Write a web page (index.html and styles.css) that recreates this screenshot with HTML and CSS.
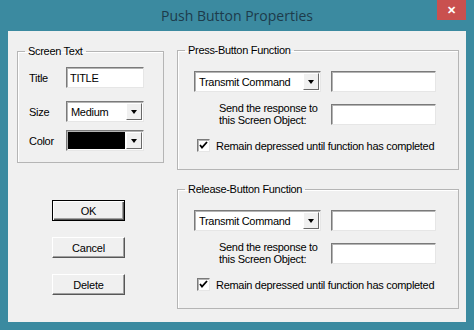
FILE: index.html
```html
<!DOCTYPE html>
<html lang="en">
<head>
    <meta charset="UTF-8">
    <title>Push Button Properties</title>
    <link rel="stylesheet" href="styles.css">
</head>
<body>
    <div class="window">
        <div class="titlebar">
            <span></span>
            <span class="title">Push Button Properties</span>
            <span class="close">&#x2715;</span>
        </div>
        <div class="client">
            <div class="left">
                <fieldset class="group screen-text">
                    <legend>Screen Text</legend>
                    <div class="field first">
                        <label>Title</label>
                        <input class="edit short" type="text" value="TITLE">
                    </div>
                    <div class="field size">
                        <label>Size</label>
                        <div class="combo short">
                            <span class="combo-value">Medium</span>
                            <span class="combo-btn"><i class="arrow"></i></span>
                        </div>
                    </div>
                    <div class="field color">
                        <label>Color</label>
                        <div class="combo short">
                            <span class="combo-value swatch"></span>
                            <span class="combo-btn"><i class="arrow"></i></span>
                        </div>
                    </div>
                </fieldset>
                <div class="buttons">
                    <button class="btn default">OK</button>
                    <button class="btn">Cancel</button>
                    <button class="btn">Delete</button>
                </div>
            </div>
            <div class="right">
                <fieldset class="group func">
                    <legend>Press-Button Function</legend>
                    <div class="func-row">
                        <div class="combo wide">
                            <span class="combo-value">Transmit Command</span>
                            <span class="combo-btn"><i class="arrow"></i></span>
                        </div>
                        <input class="edit long" type="text">
                    </div>
                    <div class="func-row response">
                        <span class="response-text">Send the response to<br>this Screen Object:</span>
                        <input class="edit long" type="text">
                    </div>
                    <div class="check-row">
                        <span class="check"><svg width="9" height="9" viewBox="0 0 9 9"><path d="M1 4 L3 6.5 L8 1" fill="none" stroke="#000" stroke-width="1.8"/></svg></span>
                        <span>Remain depressed until function has completed</span>
                    </div>
                </fieldset>
                <fieldset class="group func release">
                    <legend>Release-Button Function</legend>
                    <div class="func-row">
                        <div class="combo wide">
                            <span class="combo-value">Transmit Command</span>
                            <span class="combo-btn"><i class="arrow"></i></span>
                        </div>
                        <input class="edit long" type="text">
                    </div>
                    <div class="func-row response">
                        <span class="response-text">Send the response to<br>this Screen Object:</span>
                        <input class="edit long" type="text">
                    </div>
                    <div class="check-row">
                        <span class="check"><svg width="9" height="9" viewBox="0 0 9 9"><path d="M1 4 L3 6.5 L8 1" fill="none" stroke="#000" stroke-width="1.8"/></svg></span>
                        <span>Remain depressed until function has completed</span>
                    </div>
                </fieldset>
            </div>
        </div>
    </div>
</body>
</html>
```
FILE: styles.css
```css
body {
    margin: 0;
    padding: 0;
    background-color: #3b8aa0;
    font-family: "Liberation Sans", Arial, sans-serif;
    font-size: 11px;
    letter-spacing: -0.3px;
    color: #000;
}
.window {
    width: 474px;
    height: 330px;
    background-color: #3b8aa0;
}
.titlebar {
    height: 31px;
    display: grid;
    grid-template-columns: 1fr auto 1fr;
}
.title {
    font-family: "Open Sans", "Noto Sans", sans-serif;
    font-size: 14px;
    letter-spacing: 0;
    color: #1d3b4b;
    line-height: 32px;
}
.close {
    justify-self: end;
    width: 29px;
    height: 20px;
    margin-right: 8px;
    background-color: #c9504f;
    color: #fff;
    font-size: 11px;
    font-weight: bold;
    letter-spacing: 0;
    text-align: center;
    line-height: 20px;
}
.client {
    margin: 0 8px;
    height: 291px;
    background-color: #f0f0f0;
    display: flex;
    padding: 14px 0 0 9px;
    box-sizing: border-box;
}
.left {
    width: 147px;
    flex-shrink: 0;
    margin-right: 13px;
}
.right {
    width: 282px;
    flex-shrink: 0;
    min-width: 0;
    margin-top: -1px;
}
.group {
    margin: 0;
    padding: 0;
    min-width: 0;
    border: 1px solid #b5b5b5;
    box-shadow: inset 1px 1px 0 #fff;
}
.group legend {
    margin-left: 7px;
    padding: 0 3px;
    line-height: 13px;
}
.screen-text {
    height: 118px;
    box-sizing: border-box;
}
.field {
    display: flex;
    align-items: center;
    padding-left: 11px;
}
.field label {
    width: 37px;
}
.field.first { margin-top: 9px; }
.field.size { margin-top: 13px; }
.field.color { margin-top: 8px; }
.edit {
    height: 21px;
    box-sizing: border-box;
    margin: 0;
    padding: 1px 3px 0;
    background: #fff;
    border: 1px solid;
    border-color: #7a7a7a #e6e6e6 #e6e6e6 #7a7a7a;
    box-shadow: inset 1px 1px 0 #b4b4b4;
    font-family: "Liberation Sans", Arial, sans-serif;
    font-size: 11px;
    letter-spacing: -0.3px;
    color: #000;
    outline: none;
}
.short { width: 78px; }
.long { width: 105px; }
.wide { width: 127px; }
.combo {
    height: 21px;
    box-sizing: border-box;
    display: flex;
    background: #fff;
    border: 1px solid;
    border-color: #7a7a7a #e6e6e6 #e6e6e6 #7a7a7a;
    box-shadow: inset 1px 1px 0 #b4b4b4;
    padding: 1px;
}
.combo-value {
    flex: 1;
    padding-left: 3px;
    line-height: 18px;
}
.combo-value.swatch {
    background: #000;
    margin-right: 1px;
}
.combo-btn {
    width: 16px;
    box-sizing: border-box;
    background: #f0f0f0;
    border: 1px solid;
    border-color: #fff #696969 #696969 #fff;
    display: flex;
    align-items: center;
    justify-content: center;
}
.arrow {
    width: 0;
    height: 0;
    border-left: 3.5px solid transparent;
    border-right: 3.5px solid transparent;
    border-top: 4px solid #000;
}
.buttons {
    display: flex;
    flex-direction: column;
    gap: 16px;
    margin: 37px 0 0 35px;
}
.btn {
    width: 73px;
    height: 21px;
    padding: 0;
    background: #f0f0f0;
    border: 1px solid;
    border-color: #fff #575757 #575757 #fff;
    box-shadow: inset -1px -1px 0 #a0a0a0;
    font-family: "Liberation Sans", Arial, sans-serif;
    font-size: 11px;
    letter-spacing: -0.2px;
    color: #000;
}
.btn.default {
    border-color: #000;
    box-shadow: inset 1px 1px 0 #fff, inset -1px -1px 0 #575757, inset -2px -2px 0 #a0a0a0;
}
.func {
    height: 126px;
    box-sizing: border-box;
}
.release {
    margin-top: 13px;
}
.func-row {
    display: flex;
    align-items: center;
    gap: 10px;
    padding-left: 16px;
    margin-top: 14px;
}
.func-row.response {
    margin-top: 10px;
    gap: 7px;
}
.response-text {
    width: 130px;
    box-sizing: border-box;
    padding-left: 25px;
    line-height: 12px;
}
.check-row {
    display: flex;
    align-items: center;
    gap: 6px;
    padding-left: 19px;
    margin-top: 13px;
}
.check {
    width: 13px;
    height: 13px;
    box-sizing: border-box;
    background: #fff;
    border: 1px solid;
    border-color: #7a7a7a #e6e6e6 #e6e6e6 #7a7a7a;
    box-shadow: inset 1px 1px 0 #b4b4b4;
    display: flex;
    align-items: center;
    justify-content: center;
}
```
